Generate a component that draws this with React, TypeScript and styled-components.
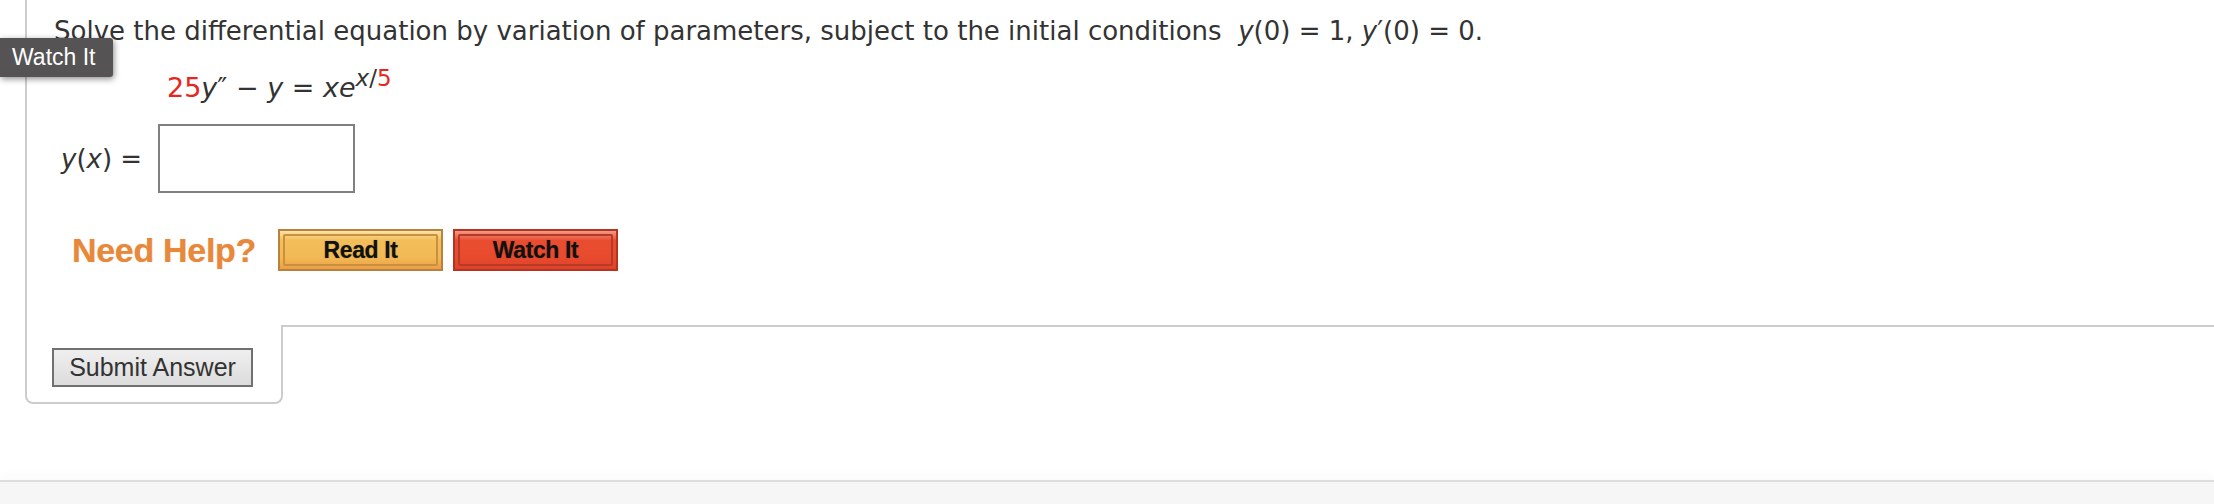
import React from "react";
import styled, { createGlobalStyle } from "styled-components";

const Global = createGlobalStyle`
  html, body { margin: 0; padding: 0; background: #fff; }
  body { font-family: "DejaVu Sans", Verdana, sans-serif; color: #333; }
`;

const Page = styled.div`
  position: relative;
  display: flex;
  flex-direction: column;
  min-height: 504px;
  overflow: hidden;
`;

const Main = styled.div`
  flex: 1;
  padding-left: 25px;
`;

const Card = styled.div`
  border-left: 2px solid #cccccc;
  padding: 15px 0 54px 27px;
`;

const Prompt = styled.p`
  margin: 0;
  font-size: 26px;
  line-height: 32px;
  color: #333;
`;

const MathI = styled.i`
  font-style: italic;
`;

const Prime = styled.span`
  font-style: normal;
`;

const Equation = styled.div`
  margin: 24px 0 0 113px;
  font-size: 27px;
  line-height: 34px;
  color: #333;
`;

const Red = styled.span`
  color: #e8261b;
  font-style: normal;
`;

const Sup = styled.sup`
  font-size: 23px;
  vertical-align: 11px;
  line-height: 0;
`;

const AnswerRow = styled.div`
  display: flex;
  align-items: center;
  gap: 16px;
  margin: 19px 0 0 7px;
`;

const Label = styled.span`
  font-size: 26px;
  color: #333;
`;

const AnswerBox = styled.input`
  box-sizing: border-box;
  width: 197px;
  height: 69px;
  border: 2px solid #808080;
  background: #fff;
  outline: none;
  font-size: 22px;
  padding: 0 6px;
`;

const HelpRow = styled.div`
  display: flex;
  align-items: center;
  height: 42px;
  margin: 36px 0 0 18px;
`;

const NeedHelp = styled.span`
  font-family: "Liberation Sans", Arial, sans-serif;
  font-weight: bold;
  font-size: 34px;
  letter-spacing: -0.3px;
  color: #e8883a;
  width: 206px;
  text-shadow: 0 0 1px rgba(232, 136, 58, 0.5);
`;

const HelpButton = styled.button<{ $variant: "read" | "watch" }>`
  box-sizing: border-box;
  width: 165px;
  height: 42px;
  margin-right: 10px;
  padding: 3px;
  border: 2px solid ${(p) => (p.$variant === "read" ? "#b8823e" : "#b5341f")};
  background: ${(p) =>
    p.$variant === "read"
      ? "linear-gradient(#fbe3a6 0%, #f3be5a 25%, #f2b955 70%, #ee9e45 100%)"
      : "linear-gradient(#f39a86 0%, #e94d30 25%, #e84a2e 70%, #e0412a 100%)"};
  cursor: pointer;
  display: flex;
`;

const HelpInner = styled.span<{ $variant: "read" | "watch" }>`
  flex: 1;
  display: flex;
  align-items: center;
  justify-content: center;
  border: 2px solid ${(p) => (p.$variant === "read" ? "#c8913f" : "#b63b26")};
  border-radius: 2px;
  font-family: "Liberation Sans", Arial, sans-serif;
  font-weight: bold;
  font-size: 23px;
  letter-spacing: -0.4px;
  color: #111;
  text-shadow: 0 0 1px rgba(0, 0, 0, 0.4);
`;

const BottomRow = styled.div`
  display: flex;
`;

const SubmitPanel = styled.div`
  box-sizing: border-box;
  width: 258px;
  height: 79px;
  border: 2px solid #cccccc;
  border-top: none;
  border-radius: 0 0 8px 8px;
  padding: 23px 0 0 25px;
`;

const Filler = styled.div`
  flex: 1;
  border-top: 2px solid #cccccc;
`;

const SubmitButton = styled.button`
  box-sizing: border-box;
  width: 201px;
  height: 39px;
  border: 2px solid #707070;
  background: linear-gradient(#efefef, #dcdcdc);
  font-family: "Liberation Sans", Arial, sans-serif;
  font-size: 25px;
  color: #333;
  padding: 0;
  cursor: pointer;
`;

const Footer = styled.div`
  height: 22px;
  border-top: 2px solid #dedede;
  background: #f6f6f6;
  box-shadow: 0 -6px 8px rgba(0, 0, 0, 0.02);
`;

const Tooltip = styled.div`
  position: absolute;
  left: 0;
  top: 38px;
  box-sizing: border-box;
  width: 113px;
  height: 39px;
  background: #555354;
  border-radius: 0 3px 3px 0;
  box-shadow: 1px 2px 6px rgba(0, 0, 0, 0.45);
  color: #fff;
  font-family: "Liberation Sans", Arial, sans-serif;
  font-size: 23px;
  display: flex;
  align-items: center;
  padding-left: 12px;
`;

export default function App() {
  return (
    <>
      <Global />
      <Page>
        <Main>
          <Card>
            <Prompt>
              Solve the differential equation by variation of parameters, subject to the initial conditions&nbsp;{" "}
              <MathI>y</MathI>(0) = 1, <MathI>y</MathI>′(0) = 0.
            </Prompt>
            <Equation>
              <Red>25</Red>
              <MathI>y</MathI>
              <Prime>″</Prime> − <MathI>y</MathI> = <MathI>xe</MathI>
              <Sup>
                <MathI>x</MathI>/<Red>5</Red>
              </Sup>
            </Equation>
            <AnswerRow>
              <Label>
                <MathI>y</MathI>(<MathI>x</MathI>) =
              </Label>
              <AnswerBox type="text" aria-label="y(x)" />
            </AnswerRow>
            <HelpRow>
              <NeedHelp>Need Help?</NeedHelp>
              <HelpButton $variant="read">
                <HelpInner $variant="read">Read It</HelpInner>
              </HelpButton>
              <HelpButton $variant="watch">
                <HelpInner $variant="watch">Watch It</HelpInner>
              </HelpButton>
            </HelpRow>
          </Card>
          <BottomRow>
            <SubmitPanel>
              <SubmitButton>Submit Answer</SubmitButton>
            </SubmitPanel>
            <Filler />
          </BottomRow>
        </Main>
        <Footer />
        <Tooltip>Watch It</Tooltip>
      </Page>
    </>
  );
}
